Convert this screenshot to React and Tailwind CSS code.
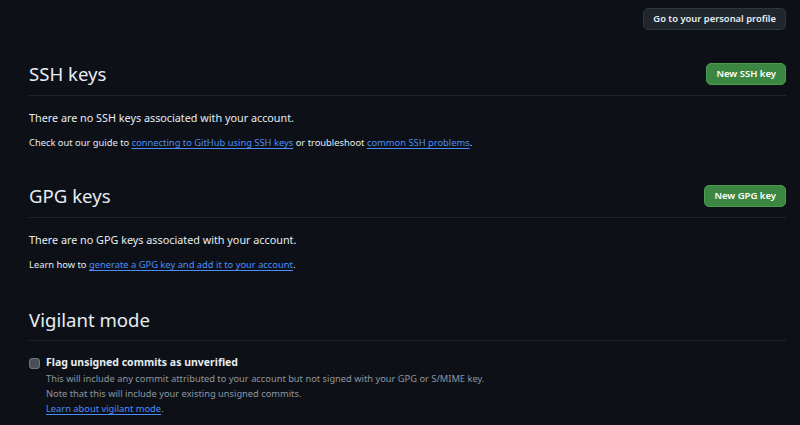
import React from 'react'

function Section({ title, action, children, last }) {
  return (
    <section className={last ? 'mt-[32px]' : 'mt-[30px]'}>
      <div
        className={`flex items-center justify-between border-b border-[#21262d] ${
          action ? 'pb-[7px]' : 'pb-[6px]'
        }`}
      >
        <h2 className="text-[18.6px] leading-[28px] font-normal text-[#e6edf3]">{title}</h2>
        {action && (
          <button className="h-[22px] px-[9px] rounded-[5px] bg-[#3b8640] border border-[#4a9a50] text-white text-[9.5px] font-semibold leading-none">
            {action}
          </button>
        )}
      </div>
      {children}
    </section>
  )
}

function Link({ children }) {
  return <a href="#" className="text-[#4c8df6] underline underline-offset-2 decoration-1">{children}</a>
}

export default function App() {
  return (
    <div
      className="min-h-screen bg-[#0d1117] text-[#e6edf3] pl-[29px] pr-[14px] pt-[8px]"
      style={{ fontFamily: '"Noto Sans", "Open Sans", sans-serif' }}
    >
      <div className="flex justify-end">
        <button className="h-[22px] px-[9px] rounded-[5px] bg-[#21262d] border border-[#30363d] text-[9.4px] font-semibold text-[#e6edf3] leading-none">
          Go to your personal profile
        </button>
      </div>

      <Section title="SSH keys" action="New SSH key">
        <p className="mt-[12px] text-[10.8px] leading-[20px]">There are no SSH keys associated with your account.</p>
        <p className="mt-[6px] text-[9.35px] leading-[18px]">
          Check out our guide to <Link>connecting to GitHub using SSH keys</Link> or troubleshoot{' '}
          <Link>common SSH problems</Link>.
        </p>
      </Section>

      <Section title="GPG keys" action="New GPG key">
        <p className="mt-[12px] text-[10.8px] leading-[20px]">There are no GPG keys associated with your account.</p>
        <p className="mt-[6px] text-[9.35px] leading-[18px]">
          Learn how to <Link>generate a GPG key and add it to your account</Link>.
        </p>
      </Section>

      <Section title="Vigilant mode" last>
        <div className="mt-[12px] flex gap-[6px]">
          <div className="pt-[5px]">
            <div className="w-[11px] h-[11px] rounded-[3px] bg-[#4a4f57] border border-[#6e7681]" />
          </div>
          <div>
            <div className="text-[10.5px] leading-[18px] font-bold">Flag unsigned commits as unverified</div>
            <div className="text-[9.3px] leading-[15px] text-[#8d96a0]">
              This will include any commit attributed to your account but not signed with your GPG or S/MIME key.
            </div>
            <div className="text-[9.3px] leading-[15px] text-[#8d96a0]">
              Note that this will include your existing unsigned commits.
            </div>
            <div className="text-[9.3px] leading-[15px] text-[#8d96a0]">
              <Link>Learn about vigilant mode</Link>.
            </div>
          </div>
        </div>
      </Section>
    </div>
  )
}
